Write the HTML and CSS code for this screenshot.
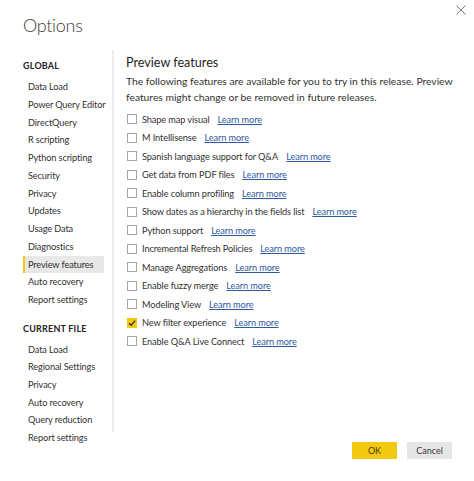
FILE: index.html
```html
<!DOCTYPE html>
<html>
<head>
<meta charset="utf-8">
<link rel="stylesheet" href="styles.css">
</head>
<body>
<div class="dialog">
  <div class="header">
    <h1 class="title">Options</h1>
    <svg class="close" width="10" height="10" viewBox="0 0 10 10"><path d="M0.5 0.5 L9.5 9.5 M9.5 0.5 L0.5 9.5" stroke="#777" stroke-width="1" fill="none"/></svg>
  </div>
  <div class="body">
    <nav class="sidebar">
      <div class="section-title">GLOBAL</div>
      <ul class="nav-list">
        <li>Data Load</li>
        <li>Power Query Editor</li>
        <li>DirectQuery</li>
        <li>R scripting</li>
        <li>Python scripting</li>
        <li>Security</li>
        <li>Privacy</li>
        <li>Updates</li>
        <li>Usage Data</li>
        <li>Diagnostics</li>
        <li class="selected">Preview features</li>
        <li>Auto recovery</li>
        <li>Report settings</li>
      </ul>
      <div class="section-title second">CURRENT FILE</div>
      <ul class="nav-list file">
        <li>Data Load</li>
        <li>Regional Settings</li>
        <li>Privacy</li>
        <li>Auto recovery</li>
        <li>Query reduction</li>
        <li>Report settings</li>
      </ul>
    </nav>
    <main class="main">
      <h2 class="heading">Preview features</h2>
      <p class="desc">The following features are available for you to try in this release. Preview<br>features might change or be removed in future releases.</p>
      <ul class="features">
        <li><span class="box"></span><span class="label">Shape map visual</span><a class="link">Learn more</a></li>
        <li><span class="box"></span><span class="label">M Intellisense</span><a class="link">Learn more</a></li>
        <li><span class="box"></span><span class="label">Spanish language support for Q&amp;A</span><a class="link">Learn more</a></li>
        <li><span class="box"></span><span class="label">Get data from PDF files</span><a class="link">Learn more</a></li>
        <li><span class="box"></span><span class="label">Enable column profiling</span><a class="link">Learn more</a></li>
        <li><span class="box"></span><span class="label">Show dates as a hierarchy in the fields list</span><a class="link">Learn more</a></li>
        <li><span class="box"></span><span class="label">Python support</span><a class="link">Learn more</a></li>
        <li><span class="box"></span><span class="label">Incremental Refresh Policies</span><a class="link">Learn more</a></li>
        <li><span class="box"></span><span class="label">Manage Aggregations</span><a class="link">Learn more</a></li>
        <li><span class="box"></span><span class="label">Enable fuzzy merge</span><a class="link">Learn more</a></li>
        <li><span class="box"></span><span class="label">Modeling View</span><a class="link">Learn more</a></li>
        <li><span class="box checked"><svg width="10" height="10" viewBox="0 0 10 10"><path d="M2 5.2 L4.1 7.3 L8.2 2.6" stroke="#333" stroke-width="1.3" fill="none"/></svg></span><span class="label">New filter experience</span><a class="link">Learn more</a></li>
        <li><span class="box"></span><span class="label">Enable Q&amp;A Live Connect</span><a class="link">Learn more</a></li>
      </ul>
    </main>
  </div>
  <div class="footer">
    <button class="btn primary">OK</button>
    <button class="btn">Cancel</button>
  </div>
</div>
</body>
</html>
```

FILE: styles.css
```css
html, body {
  margin: 0;
  padding: 0;
  background: #ffffff;
}
body {
  font-family: Lato, "Open Sans", sans-serif;
  color: #333333;
  width: 474px;
  height: 481px;
  overflow: hidden;
}
.dialog {
  position: relative;
  width: 474px;
  height: 481px;
}
.header {
  height: 50px;
  padding-left: 23px;
  box-sizing: border-box;
}
.title {
  margin: 0;
  padding-top: 11px;
  font-size: 18px;
  line-height: 28px;
  font-weight: 300;
  color: #3b3a39;
  letter-spacing: -0.3px;
}
.close {
  position: absolute;
  top: 5px;
  right: 8px;
}
.body {
  display: flex;
  height: 382px;
}
.sidebar {
  width: 89px;
  padding-left: 23px;
  padding-top: 7px;
  border-right: 2px solid #ededed;
  flex-shrink: 0;
}
.section-title {
  font-size: 9px;
  font-weight: 700;
  line-height: 18px;
  color: #252423;
  margin-bottom: 3px;
  letter-spacing: 0.2px;
}
.section-title.second {
  margin-top: 11px;
}
.nav-list {
  list-style: none;
  margin: 0;
  padding: 0;
}
.nav-list li {
  height: 17.75px;
  line-height: 17.75px;
  font-size: 9.2px;
  letter-spacing: -0.12px;
  padding-left: 5px;
  border-left: 2px solid transparent;
  margin-left: -2px;
  white-space: nowrap;
  color: #323130;
}
.nav-list.file li {
  height: 17.6px;
  line-height: 17.6px;
}
.nav-list li.selected {
  background: #e8e8e8;
  border-left-color: #f2c811;
  margin-left: 0;
  padding-left: 3px;
  margin-right: 8px;
}
.main {
  flex: 1;
  padding-left: 12px;
  padding-top: 3px;
}
.heading {
  margin: 0;
  font-size: 12.6px;
  font-weight: 400;
  line-height: 20px;
  color: #252423;
}
.desc {
  margin: 0;
  font-size: 10.3px;
  line-height: 16px;
  color: #323130;
  white-space: nowrap;
}
.features {
  list-style: none;
  margin: 5px 0 0 0;
  padding: 0;
}
.features li {
  display: flex;
  align-items: center;
  height: 18.5px;
  font-size: 9.2px;
  letter-spacing: -0.1px;
  white-space: nowrap;
}
.box {
  width: 8px;
  height: 8px;
  border: 1px solid #a6a6a6;
  background: #fff;
  margin-left: 1px;
  margin-right: 5px;
  flex-shrink: 0;
  position: relative;
}
.box.checked {
  background: #f2c811;
  border-color: #f2c811;
}
.box.checked svg {
  position: absolute;
  left: -1px;
  top: -1px;
}
.label {
  color: #323130;
}
.link {
  margin-left: 8px;
  color: #2e5a9e;
  text-decoration: underline;
}
.footer {
  display: flex;
  justify-content: flex-end;
  gap: 10px;
  padding-right: 22px;
  margin-top: 10px;
}
.btn {
  width: 45px;
  height: 17px;
  border: none;
  padding: 0;
  font-family: Lato, "Open Sans", sans-serif;
  font-size: 9px;
  color: #3b3a39;
  background: #e6e6e6;
}
.btn.primary {
  background: #f2c811;
  color: #4a3f00;
}
```
